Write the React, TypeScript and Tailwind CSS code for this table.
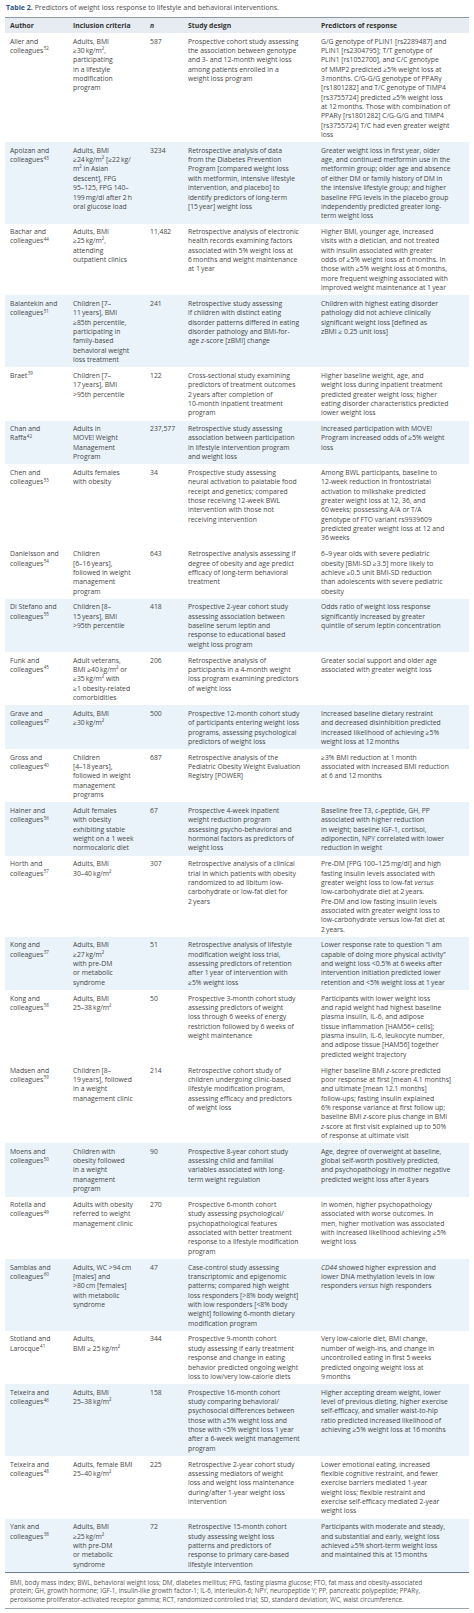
const T = "\u2009";

type Row = {
  a: string[];
  ref: string;
  inc: string[];
  n: string;
  sd: string[];
  pr: string[];
  blue?: boolean;
};

const rows: Row[] = [
  {
    a: ["Aller and", "colleagues"],
    ref: "52",
    inc: ["Adults, BMI", `≥30${T}kg/m²,`, "participating", "in a lifestyle", "modification", "program"],
    n: "587",
    sd: [
      "Prospective cohort study assessing",
      "the association between genotype",
      "and 3- and 12-month weight loss",
      "among patients enrolled in a",
      "weight loss program",
    ],
    pr: [
      "G/G genotype of PLIN1 [rs2289487] and",
      "PLIN1 [rs2304795]; T/T genotype of",
      "PLIN1 [rs1052700], and C/C genotype",
      "of MMP2 predicted ≥5% weight loss at",
      `3${T}months. C/G-G/G genotype of PPARγ`,
      "[rs1801282] and T/C genotype of TIMP4",
      "[rs3755724] predicted ≥5% weight loss",
      `at 12${T}months. Those with combination of`,
      "PPARγ [rs1801282] C/G-G/G and TIMP4",
      "[rs3755724] T/C had even greater weight",
      "loss",
    ],
  },
  {
    a: ["Apolzan and", "colleagues"],
    ref: "43",
    blue: true,
    inc: [
      "Adults, BMI",
      `≥24${T}kg/m² [≥22${T}kg/`,
      "m² in Asian",
      "descent], FPG",
      "95–125, FPG 140–",
      `199${T}mg/dl after 2${T}h`,
      "oral glucose load",
    ],
    n: "3234",
    sd: [
      "Retrospective analysis of data",
      "from the Diabetes Prevention",
      "Program [compared weight loss",
      "with metformin, intensive lifestyle",
      "intervention, and placebo] to",
      "identify predictors of long-term",
      `[15${T}year] weight loss`,
    ],
    pr: [
      "Greater weight loss in first year, older",
      "age, and continued metformin use in the",
      "metformin group; older age and absence",
      "of either DM or family history of DM in",
      "the intensive lifestyle group; and higher",
      "baseline FPG levels in the placebo group",
      "independently predicted greater long-",
      "term weight loss",
    ],
  },
  {
    a: ["Bachar and", "colleagues"],
    ref: "44",
    inc: ["Adults, BMI", `≥25${T}kg/m²,`, "attending", "outpatient clinics"],
    n: "11,482",
    sd: [
      "Retrospective analysis of electronic",
      "health records examining factors",
      "associated with 5% weight loss at",
      `6${T}months and weight maintenance`,
      `at 1${T}year`,
    ],
    pr: [
      "Higher BMI, younger age, increased",
      "visits with a dietician, and not treated",
      "with insulin associated with greater",
      `odds of ≥5% weight loss at 6${T}months. In`,
      `those with ≥5% weight loss at 6${T}months,`,
      "more frequent weighing associated with",
      `improved weight maintenance at 1${T}year`,
    ],
  },
  {
    a: ["Balantekin and", "colleagues"],
    ref: "51",
    blue: true,
    inc: [
      "Children [7–",
      `11${T}years], BMI`,
      "≥85th percentile,",
      "participating in",
      "family-based",
      "behavioral weight",
      "loss treatment",
    ],
    n: "241",
    sd: [
      "Retrospective study assessing",
      "if children with distinct eating",
      "disorder patterns differed in eating",
      "disorder pathology and BMI-for-",
      "age _z_-score [zBMI] change",
    ],
    pr: [
      "Children with highest eating disorder",
      "pathology did not achieve clinically",
      "significant weight loss [defined as",
      "zBMI ≥ 0.25 unit loss]",
    ],
  },
  {
    a: ["Braet"],
    ref: "39",
    inc: ["Children [7–", `17${T}years], BMI`, ">95th percentile"],
    n: "122",
    sd: [
      "Cross-sectional study examining",
      "predictors of treatment outcomes",
      `2${T}years after completion of`,
      "10-month inpatient treatment",
      "program",
    ],
    pr: [
      "Higher baseline weight, age, and",
      "weight loss during inpatient treatment",
      "predicted greater weight loss; higher",
      "eating disorder characteristics predicted",
      "lower weight loss",
    ],
  },
  {
    a: ["Chan and", "Raffa"],
    ref: "42",
    blue: true,
    inc: ["Adults in", "MOVE! Weight", "Management", "Program"],
    n: "237,577",
    sd: [
      "Retrospective study assessing",
      "association between participation",
      "in lifestyle intervention program",
      "and weight loss",
    ],
    pr: [
      "Increased participation with MOVE!",
      "Program increased odds of ≥5% weight",
      "loss",
    ],
  },
  {
    a: ["Chen and", "colleagues"],
    ref: "53",
    inc: ["Adults females", "with obesity"],
    n: "34",
    sd: [
      "Prospective study assessing",
      "neural activation to palatable food",
      "receipt and genetics; compared",
      "those receiving 12-week BWL",
      "intervention with those not",
      "receiving intervention",
    ],
    pr: [
      "Among BWL participants, baseline to",
      "12-week reduction in frontostriatal",
      "activation to milkshake predicted",
      "greater weight loss at 12, 36, and",
      `60${T}weeks; possessing A/A or T/A`,
      "genotype of FTO variant rs9939609",
      "predicted greater weight loss at 12 and",
      `36${T}weeks`,
    ],
  },
  {
    a: ["Danielsson and", "colleagues"],
    ref: "54",
    inc: ["Children", `[6–16${T}years],`, "followed in weight", "management", "program"],
    n: "643",
    sd: [
      "Retrospective analysis assessing if",
      "degree of obesity and age predict",
      "efficacy of long-term behavioral",
      "treatment",
    ],
    pr: [
      `6–9${T}year olds with severe pediatric`,
      "obesity [BMI-SD ≥3.5] more likely to",
      "achieve ≥0.5 unit BMI-SD reduction",
      "than adolescents with severe pediatric",
      "obesity",
    ],
  },
  {
    a: ["Di Stefano and", "colleagues"],
    ref: "55",
    blue: true,
    inc: ["Children [8–", `15${T}years], BMI`, ">95th percentile"],
    n: "418",
    sd: [
      "Prospective 2-year cohort study",
      "assessing association between",
      "baseline serum leptin and",
      "response to educational based",
      "weight loss program",
    ],
    pr: [
      "Odds ratio of weight loss response",
      "significantly increased by greater",
      "quintile of serum leptin concentration",
    ],
  },
  {
    a: ["Funk and", "colleagues"],
    ref: "45",
    inc: [
      "Adult veterans,",
      `BMI ≥40${T}kg/m² or`,
      `≥35${T}kg/m² with`,
      "≥1 obesity-related",
      "comorbidities",
    ],
    n: "206",
    sd: [
      "Retrospective analysis of",
      "participants in a 4-month weight",
      "loss program examining predictors",
      "of weight loss",
    ],
    pr: ["Greater social support and older age", "associated with greater weight loss"],
  },
  {
    a: ["Grave and", "colleagues"],
    ref: "47",
    blue: true,
    inc: ["Adults, BMI", `≥30${T}kg/m²`],
    n: "500",
    sd: [
      "Prospective 12-month cohort study",
      "of participants entering weight loss",
      "programs, assessing psychological",
      "predictors of weight loss",
    ],
    pr: [
      "Increased baseline dietary restraint",
      "and decreased disinhibition predicted",
      "increased likelihood of achieving ≥5%",
      `weight loss at 12${T}months`,
    ],
  },
  {
    a: ["Gross and", "colleagues"],
    ref: "40",
    inc: ["Children", `[4–18${T}years],`, "followed in weight", "management", "programs"],
    n: "687",
    sd: [
      "Retrospective analysis of the",
      "Pediatric Obesity Weight Evaluation",
      "Registry [POWER]",
    ],
    pr: [
      `≥3% BMI reduction at 1${T}month`,
      "associated with increased BMI reduction",
      `at 6 and 12${T}months`,
    ],
  },
  {
    a: ["Hainer and", "colleagues"],
    ref: "56",
    blue: true,
    inc: [
      "Adult females",
      "with obesity",
      "exhibiting stable",
      "weight on a 1 week",
      "normocaloric diet",
    ],
    n: "67",
    sd: [
      "Prospective 4-week inpatient",
      "weight reduction program",
      "assessing psycho-behavioral and",
      "hormonal factors as predictors of",
      "weight loss",
    ],
    pr: [
      "Baseline free T3, c-peptide, GH, PP",
      "associated with higher reduction",
      "in weight; baseline IGF-1, cortisol,",
      "adiponectin, NPY correlated with lower",
      "reduction in weight",
    ],
  },
  {
    a: ["Horth and", "colleagues"],
    ref: "57",
    inc: ["Adults, BMI", `30–40${T}kg/m²`],
    n: "307",
    sd: [
      "Retrospective analysis of a clinical",
      "trial in which patients with obesity",
      "randomized to ad libitum low-",
      "carbohydrate or low-fat diet for",
      `2${T}years`,
    ],
    pr: [
      `Pre-DM [FPG 100–125${T}mg/dl] and high`,
      "fasting insulin levels associated with",
      "greater weight loss to low-fat _versus_",
      `low-carbohydrate diet at 2${T}years.`,
      "Pre-DM and low fasting insulin levels",
      "associated with greater weight loss to",
      "low-carbohydrate versus low-fat diet at",
      `2${T}years.`,
    ],
  },
  {
    a: ["Kong and", "colleagues"],
    ref: "37",
    blue: true,
    inc: ["Adults, BMI", `≥27${T}kg/m²`, "with pre-DM", "or metabolic", "syndrome"],
    n: "51",
    sd: [
      "Retrospective analysis of lifestyle",
      "modification weight loss trial,",
      "assessing predictors of retention",
      `after 1${T}year of intervention with`,
      "≥5% weight loss",
    ],
    pr: [
      "Lower response rate to question “I am",
      "capable of doing more physical activity”",
      `and weight loss <0.5% at 6${T}weeks after`,
      "intervention initiation predicted lower",
      `retention and <5% weight loss at 1${T}year`,
    ],
  },
  {
    a: ["Kong and", "colleagues"],
    ref: "58",
    inc: ["Adults, BMI", `25–38${T}kg/m²`],
    n: "50",
    sd: [
      "Prospective 3-month cohort study",
      "assessing predictors of weight",
      "loss through 6 weeks of energy",
      "restriction followed by 6 weeks of",
      "weight maintenance",
    ],
    pr: [
      "Participants with lower weight loss",
      "and rapid weight had highest baseline",
      "plasma insulin, IL-6, and adipose",
      "tissue inflammation [HAM56+ cells];",
      "plasma insulin, IL-6, leukocyte number,",
      "and adipose tissue [HAM56] together",
      "predicted weight trajectory",
    ],
  },
  {
    a: ["Madsen and", "colleagues"],
    ref: "59",
    inc: ["Children [8–", `19${T}years], followed`, "in a weight", "management clinic"],
    n: "214",
    sd: [
      "Retrospective cohort study of",
      "children undergoing clinic-based",
      "lifestyle modification program,",
      "assessing efficacy and predictors",
      "of weight loss",
    ],
    pr: [
      "Higher baseline BMI _z_-score predicted",
      "poor response at first [mean 4.1 months]",
      "and ultimate [mean 12.1 months]",
      "follow-ups; fasting insulin explained",
      "6% response variance at first follow up;",
      "baseline BMI _z_-score plus change in BMI",
      "_z_-score at first visit explained up to 50%",
      "of response at ultimate visit",
    ],
  },
  {
    a: ["Moens and", "colleagues"],
    ref: "50",
    blue: true,
    inc: ["Children with", "obesity followed", "in a weight", "management", "program"],
    n: "90",
    sd: [
      "Prospective 8-year cohort study",
      "assessing child and familial",
      "variables associated with long-",
      "term weight regulation",
    ],
    pr: [
      "Age, degree of overweight at baseline,",
      "global self-worth positively predicted,",
      "and psychopathology in mother negative",
      `predicted weight loss after 8${T}years`,
    ],
  },
  {
    a: ["Rotella and", "colleagues"],
    ref: "49",
    inc: ["Adults with obesity", "referred to weight", "management clinic"],
    n: "270",
    sd: [
      "Prospective 6-month cohort",
      "study assessing psychological/",
      "psychopathological features",
      "associated with better treatment",
      "response to a lifestyle modification",
      "program",
    ],
    pr: [
      "In women, higher psychopathology",
      "associated with worse outcomes. In",
      "men, higher motivation was associated",
      "with increased likelihood achieving ≥5%",
      "weight loss",
    ],
  },
  {
    a: ["Samblas and", "colleagues"],
    ref: "60",
    blue: true,
    inc: [`Adults, WC >94${T}cm`, "[males] and", `>80${T}cm [females]`, "with metabolic", "syndrome"],
    n: "47",
    sd: [
      "Case-control study assessing",
      "transcriptomic and epigenomic",
      "patterns; compared high weight",
      "loss responders [>8% body weight]",
      "with low responders [<8% body",
      "weight] following 6-month dietary",
      "modification program",
    ],
    pr: [
      "_CD44_ showed higher expression and",
      "lower DNA methylation levels in low",
      "responders _versus_ high responders",
    ],
  },
  {
    a: ["Stotland and", "Larocque"],
    ref: "41",
    inc: ["Adults,", `BMI ≥ 25${T}kg/m²`],
    n: "344",
    sd: [
      "Prospective 9-month cohort",
      "study assessing if early treatment",
      "response and change in eating",
      "behavior predicted ongoing weight",
      "loss to low/very low-calorie diets",
    ],
    pr: [
      "Very low-calorie diet, BMI change,",
      "number of weigh-ins, and change in",
      `uncontrolled eating in first 5${T}weeks`,
      "predicted ongoing weight loss at",
      `9${T}months`,
    ],
  },
  {
    a: ["Teixeira and", "colleagues"],
    ref: "46",
    blue: true,
    inc: ["Adults, BMI", `25–38${T}kg/m²`],
    n: "158",
    sd: [
      "Prospective 16-month cohort",
      "study comparing behavioral/",
      "psychosocial differences between",
      "those with ≥5% weight loss and",
      `those with <5% weight loss 1${T}year`,
      "after a 6-week weight management",
      "program",
    ],
    pr: [
      "Higher accepting dream weight, lower",
      "level of previous dieting, higher exercise",
      "self-efficacy, and smaller waist-to-hip",
      "ratio predicted increased likelihood of",
      `achieving ≥5% weight loss at 16${T}months`,
    ],
  },
  {
    a: ["Teixeira and", "colleagues"],
    ref: "48",
    inc: ["Adults, female BMI", `25–40${T}kg/m²`],
    n: "225",
    sd: [
      "Retrospective 2-year cohort study",
      "assessing mediators of weight",
      "loss and weight loss maintenance",
      "during/after 1-year weight loss",
      "intervention",
    ],
    pr: [
      "Lower emotional eating, increased",
      "flexible cognitive restraint, and fewer",
      "exercise barriers mediated 1-year",
      "weight loss; flexible restraint and",
      "exercise self-efficacy mediated 2-year",
      "weight loss",
    ],
  },
  {
    a: ["Yank and", "colleagues"],
    ref: "38",
    blue: true,
    inc: ["Adults, BMI", `≥25${T}kg/m²`, "with pre-DM", "or metabolic", "syndrome"],
    n: "72",
    sd: [
      "Retrospective 15-month cohort",
      "study assessing weight loss",
      "patterns and predictors of",
      "response to primary care-based",
      "lifestyle intervention",
    ],
    pr: [
      "Participants with moderate and steady,",
      "and substantial and early, weight loss",
      "achieved ≥5% short-term weight loss",
      `and maintained this at 15${T}months`,
    ],
  },
];

// segments between underscores are italic
function Txt({ s }: { s: string }) {
  const parts = s.split("_");
  return (
    <>
      {parts.map((p, i) =>
        i % 2 === 1 ? (
          <em key={i} className="italic">
            {p}
          </em>
        ) : (
          <span key={i}>{p}</span>
        ),
      )}
    </>
  );
}

function Lines({ lines }: { lines: string[] }) {
  return (
    <div className="pl-[5px]">
      {lines.map((l, i) => (
        <div key={i} className="whitespace-nowrap">
          <Txt s={l} />
        </div>
      ))}
    </div>
  );
}

const cols = "grid grid-cols-[63px_77px_38px_133px_1fr]";

export default function App() {
  return (
    <div
      className="w-[474px] min-h-[1613px] bg-white text-[#474747]"
      style={{ fontFamily: "'Open Sans', 'Noto Sans', sans-serif" }}
    >
      <div className="h-[17px] px-[6px] pt-[2.5px] text-[7px] leading-[9px] whitespace-nowrap">
        <span className="font-bold text-[#2e5686]">Table 2.</span>{" "}
        <span className="text-[#4d4d4d]">
          Predictors of weight loss response to lifestyle and behavioral interventions.
        </span>
      </div>

      <div className="mx-[5px] text-[6.8px] leading-[9.35px]">
        <div
          className={`${cols} h-[16px] items-center border-t border-[#8a99aa] bg-[#e6ecf2] font-bold text-[#333]`}
        >
          <div className="pl-[5px]">Author</div>
          <div className="pl-[5px]">Inclusion criteria</div>
          <div className="pl-[5px] italic">n</div>
          <div className="pl-[5px]">Study design</div>
          <div className="pl-[5px]">Predictors of response</div>
        </div>

        {rows.map((r, i) => (
          <div
            key={i}
            className={`${cols} pt-[3.5px] pb-[3px] ${r.blue ? "bg-[#eaf3fa]" : "bg-white"}`}
          >
            <div className="pl-[5px]">
              {r.a.map((l, j) => (
                <div key={j} className="whitespace-nowrap">
                  {l}
                  {j === r.a.length - 1 && (
                    <span className="relative -top-[2.5px] ml-[0.5px] text-[4.5px] leading-none">
                      {r.ref}
                    </span>
                  )}
                </div>
              ))}
            </div>
            <Lines lines={r.inc} />
            <div className="pl-[5px]">{r.n}</div>
            <Lines lines={r.sd} />
            <Lines lines={r.pr} />
          </div>
        ))}

        <div className="border-t border-b border-t-[#6f7b88] border-b-[#9aa3ad] px-[5px] pt-[6px] pb-[4px] text-[6.3px] leading-[8.5px] text-[#555]">
          <div className="whitespace-nowrap">
            BMI, body mass index; BWL, behavioral weight loss; DM, diabetes mellitus; FPG, fasting plasma glucose; FTO, fat mass and obesity-associated
          </div>
          <div className="whitespace-nowrap">
            protein; GH, growth hormone; IGF-1, insulin-like growth factor-1; IL-6, interleukin-6; NPY, neuropeptide Y; PP, pancreatic polypeptide; PPARγ,
          </div>
          <div className="whitespace-nowrap">
            peroxisome proliferator-activated receptor gamma; RCT, randomized controlled trial; SD, standard deviation; WC, waist circumference.
          </div>
        </div>
      </div>
    </div>
  );
}
